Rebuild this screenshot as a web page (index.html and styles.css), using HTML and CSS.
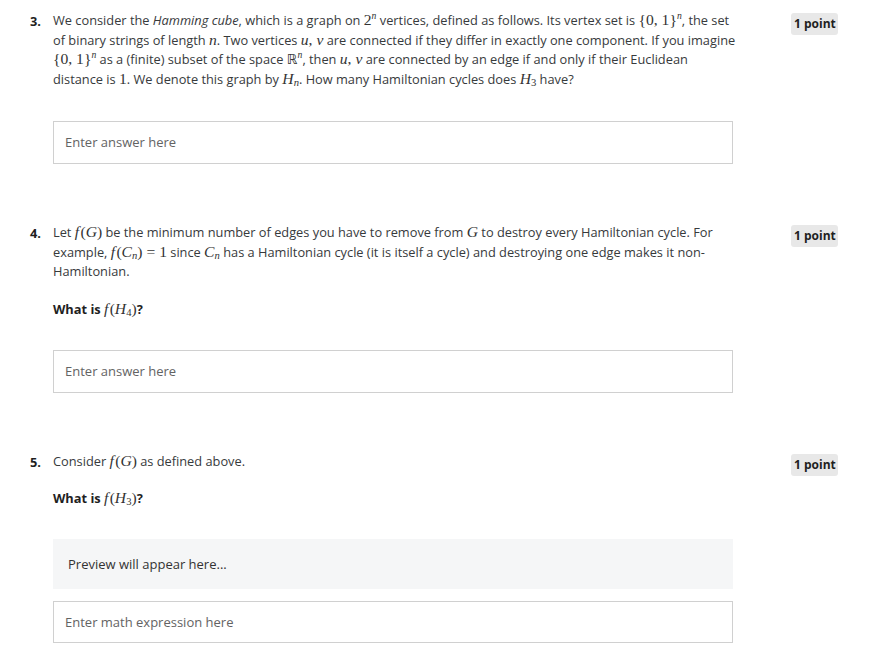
FILE: index.html
```html
<!DOCTYPE html>
<html>
<head>
<meta charset="utf-8">
<link rel="stylesheet" href="styles.css">
</head>
<body>
<div class="page">
  <div class="question q3">
    <div class="num">3.</div>
    <div class="body">
      <p class="text">We consider the <em>Hamming cube</em>, which is a graph on <span class="m">2<sup>n</sup></span> vertices, defined as follows. Its vertex set is <span class="m">{0, 1}<sup>n</sup></span>, the set of binary strings of length <span class="m"><i>n</i></span>. Two vertices <span class="m"><i>u</i>, <i>v</i></span> are connected if they differ in exactly one component. If you imagine <span class="m">{0, 1}<sup>n</sup></span> as a (finite) subset of the space <span class="m"><span class="bb">ℝ</span><sup>n</sup></span>, then <span class="m"><i>u</i>, <i>v</i></span> are connected by an edge if and only if their Euclidean distance is <span class="m">1</span>. We denote this graph by <span class="m"><i>H</i><sub>n</sub></span>. How many Hamiltonian cycles does <span class="m"><i>H</i><sub class="up">3</sub></span> have?</p>
      <div class="input">Enter answer here</div>
    </div>
    <div class="badge">1 point</div>
  </div>

  <div class="question q4">
    <div class="num">4.</div>
    <div class="body">
      <p class="text">Let <span class="m"><i>f</i>&#8202;(<i>G</i>)</span> be the minimum number of edges you have to remove from <span class="m"><i>G</i></span> to destroy every Hamiltonian cycle. For example, <span class="m"><i>f</i>&#8202;(<i>C</i><sub>n</sub>) = 1</span> since <span class="m"><i>C</i><sub>n</sub></span> has a Hamiltonian cycle (it is itself a cycle) and destroying one edge makes it non-Hamiltonian.</p>
      <p class="ask">What is <span class="m"><i>f</i>&#8202;(<i>H</i><sub class="up">4</sub>)</span>?</p>
      <div class="input">Enter answer here</div>
    </div>
    <div class="badge">1 point</div>
  </div>

  <div class="question q5">
    <div class="num">5.</div>
    <div class="body">
      <p class="text">Consider <span class="m"><i>f</i>&#8202;(<i>G</i>)</span> as defined above.</p>
      <p class="ask">What is <span class="m"><i>f</i>&#8202;(<i>H</i><sub class="up">3</sub>)</span>?</p>
      <div class="preview">Preview will appear here...</div>
      <div class="input math">Enter math expression here</div>
    </div>
    <div class="badge">1 point</div>
  </div>
</div>
</body>
</html>
```
FILE: styles.css
```css
html, body {
  margin: 0;
  padding: 0;
  background: #ffffff;
}
body {
  font-family: "Open Sans", "Liberation Sans", sans-serif;
  font-size: 12.8px;
  color: #373a3c;
}
.page {
  padding: 11px 0 0 30px;
}
.question {
  display: flex;
  align-items: flex-start;
  margin-bottom: 59px;
}
.question.q5 {
  margin-bottom: 0;
}
.num {
  width: 23px;
  flex: none;
  font-weight: 700;
  color: #1f1f1f;
  line-height: 20px;
}
.body {
  width: 680px;
  flex: none;
}
.text, .ask {
  margin: 0;
  line-height: 19.7px;
}
.text {
  margin-right: -6px;
}
.ask {
  margin-top: 18px;
  font-weight: 700;
  color: #1f1f1f;
}
.ask .m {
  font-weight: 400;
}
.m {
  font-family: "Liberation Serif", "DejaVu Serif", serif;
  font-size: 1.22em;
  line-height: 1;
  color: #333;
}
.m i {
  font-style: italic;
}
.m sup {
  font-size: 0.62em;
  font-style: italic;
  vertical-align: 0.6em;
  line-height: 0;
}
.m sub {
  font-size: 0.68em;
  font-style: italic;
  vertical-align: -0.2em;
  line-height: 0;
}
.m sub.up {
  font-style: normal;
}
.bb {
  font-family: "DejaVu Sans", sans-serif;
  font-size: 0.88em;
}
.badge {
  margin-left: 58px;
  margin-top: 2px;
  background: #e8e8e8;
  color: #1f1f1f;
  font-weight: 700;
  font-size: 12px;
  line-height: 16px;
  padding: 3px 2px 3px 3px;
  border-radius: 3px;
  flex: none;
}
.input {
  margin-top: 31px;
  box-sizing: border-box;
  height: 43px;
  border: 1px solid #d0d0d0;
  padding: 0 11px;
  display: flex;
  align-items: center;
  color: #636363;
  font-size: 13px;
}
.q4 .input {
  margin-top: 30px;
}
.preview {
  margin-top: 30px;
  height: 50px;
  background: #f5f6f7;
  padding: 0 15px;
  display: flex;
  align-items: center;
  color: #333;
  font-size: 13px;
}
.input.math {
  margin-top: 12px;
  height: 42px;
}
```
